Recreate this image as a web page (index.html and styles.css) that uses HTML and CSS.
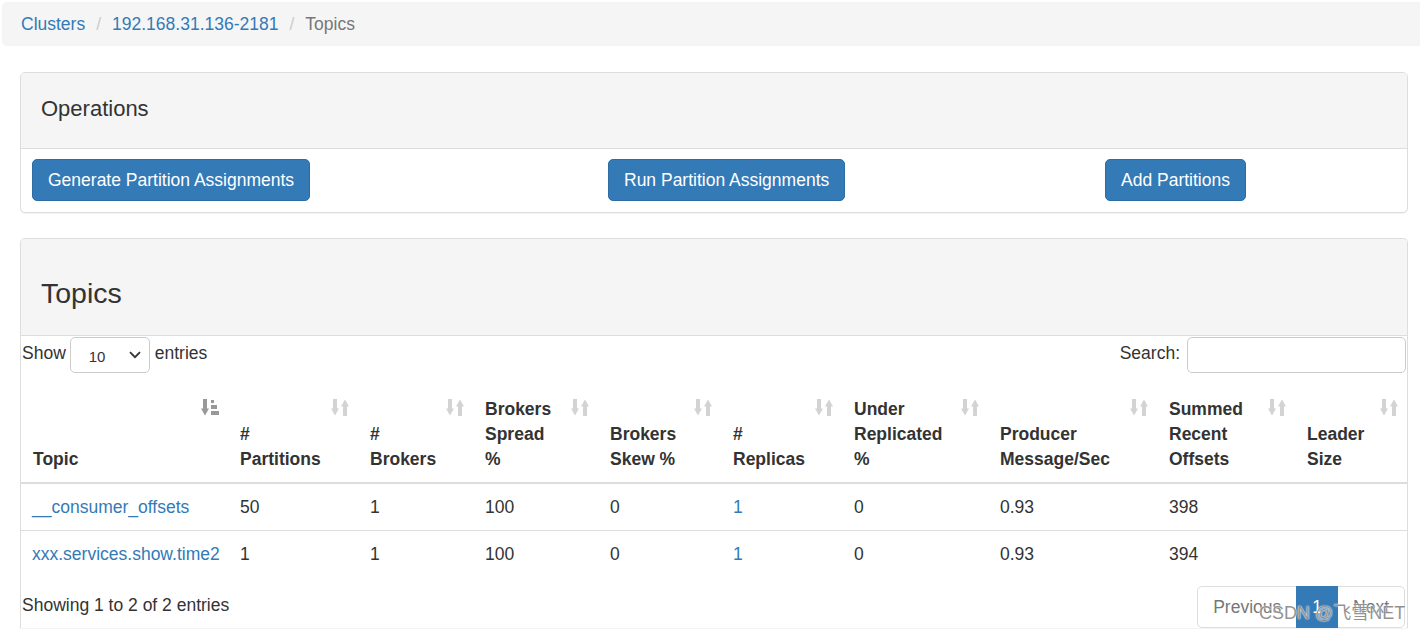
FILE: index.html
```html
<!DOCTYPE html>
<html lang="en">
<head>
<meta charset="utf-8">
<title>Topics</title>
<link rel="stylesheet" href="styles.css">
</head>
<body>
<nav class="crumbs">
  <a class="crumb-link" href="#">Clusters</a>
  <span class="crumb-sep">/</span>
  <a class="crumb-link" href="#">192.168.31.136-2181</a>
  <span class="crumb-sep">/</span>
  <span class="crumb-active">Topics</span>
</nav>

<main class="page">
  <section class="panel">
    <div class="panel-head ops-head"><h3 class="ops-title">Operations</h3></div>
    <div class="ops-body">
      <div class="ops-cell"><button class="btn">Generate Partition Assignments</button></div>
      <div class="ops-cell"><button class="btn">Run Partition Assignments</button></div>
      <div class="ops-cell"><button class="btn">Add Partitions</button></div>
    </div>
  </section>

  <section class="panel topics-panel">
    <div class="panel-head topics-head"><h2 class="topics-title">Topics</h2></div>
    <div class="dt-controls">
      <div class="dt-length">
        <span class="ctl-text">Show</span>
        <div class="fake-select"><span class="fake-select-val">10</span>
          <svg class="chev" width="12" height="8" viewBox="0 0 12 8"><path d="M1 1.2 L6 6.2 L11 1.2" fill="none" stroke="#333" stroke-width="1.8"/></svg>
        </div>
        <span class="ctl-text">entries</span>
      </div>
      <div class="dt-search">
        <span class="ctl-text">Search:</span>
        <div class="search-input"></div>
      </div>
    </div>

    <table class="dt">
      <colgroup>
        <col class="c-topic"><col class="c-part"><col class="c-brok"><col class="c-spread"><col class="c-skew">
        <col class="c-repl"><col class="c-under"><col class="c-prod"><col class="c-sum"><col class="c-lead">
      </colgroup>
      <thead>
        <tr>
          <th>Topic<svg class="sort sorted" width="19" height="17" viewBox="0 0 19 17"><rect x="2" y="0" width="4" height="10"/><path d="M0 9.5 H8 L4 16.5 Z"/><rect x="10" y="1" width="3" height="3"/><rect x="10" y="6" width="6" height="4"/><rect x="10" y="12" width="8" height="4"/></svg></th>
          <th>#<br>Partitions<svg class="sort" width="19" height="17" viewBox="0 0 19 17"><rect x="2" y="0" width="4" height="10"/><path d="M0 9.5 H8 L4 16.5 Z"/><path d="M10 7.5 H18 L14 0.5 Z"/><rect x="12" y="7" width="4" height="10"/></svg></th>
          <th>#<br>Brokers<svg class="sort" width="19" height="17" viewBox="0 0 19 17"><rect x="2" y="0" width="4" height="10"/><path d="M0 9.5 H8 L4 16.5 Z"/><path d="M10 7.5 H18 L14 0.5 Z"/><rect x="12" y="7" width="4" height="10"/></svg></th>
          <th>Brokers<br>Spread<br>%<svg class="sort" width="19" height="17" viewBox="0 0 19 17"><rect x="2" y="0" width="4" height="10"/><path d="M0 9.5 H8 L4 16.5 Z"/><path d="M10 7.5 H18 L14 0.5 Z"/><rect x="12" y="7" width="4" height="10"/></svg></th>
          <th>Brokers<br>Skew %<svg class="sort" width="19" height="17" viewBox="0 0 19 17"><rect x="2" y="0" width="4" height="10"/><path d="M0 9.5 H8 L4 16.5 Z"/><path d="M10 7.5 H18 L14 0.5 Z"/><rect x="12" y="7" width="4" height="10"/></svg></th>
          <th>#<br>Replicas<svg class="sort" width="19" height="17" viewBox="0 0 19 17"><rect x="2" y="0" width="4" height="10"/><path d="M0 9.5 H8 L4 16.5 Z"/><path d="M10 7.5 H18 L14 0.5 Z"/><rect x="12" y="7" width="4" height="10"/></svg></th>
          <th>Under<br>Replicated<br>%<svg class="sort" width="19" height="17" viewBox="0 0 19 17"><rect x="2" y="0" width="4" height="10"/><path d="M0 9.5 H8 L4 16.5 Z"/><path d="M10 7.5 H18 L14 0.5 Z"/><rect x="12" y="7" width="4" height="10"/></svg></th>
          <th>Producer<br>Message/Sec<svg class="sort" width="19" height="17" viewBox="0 0 19 17"><rect x="2" y="0" width="4" height="10"/><path d="M0 9.5 H8 L4 16.5 Z"/><path d="M10 7.5 H18 L14 0.5 Z"/><rect x="12" y="7" width="4" height="10"/></svg></th>
          <th>Summed<br>Recent<br>Offsets<svg class="sort" width="19" height="17" viewBox="0 0 19 17"><rect x="2" y="0" width="4" height="10"/><path d="M0 9.5 H8 L4 16.5 Z"/><path d="M10 7.5 H18 L14 0.5 Z"/><rect x="12" y="7" width="4" height="10"/></svg></th>
          <th>Leader<br>Size<svg class="sort" width="19" height="17" viewBox="0 0 19 17"><rect x="2" y="0" width="4" height="10"/><path d="M0 9.5 H8 L4 16.5 Z"/><path d="M10 7.5 H18 L14 0.5 Z"/><rect x="12" y="7" width="4" height="10"/></svg></th>
        </tr>
      </thead>
      <tbody>
        <tr>
          <td class="first"><a class="link" href="#">__consumer_offsets</a></td>
          <td>50</td><td>1</td><td>100</td><td>0</td>
          <td><a class="link" href="#">1</a></td>
          <td>0</td><td>0.93</td><td>398</td><td></td>
        </tr>
        <tr>
          <td class="first"><a class="link" href="#">xxx.services.show.time2</a></td>
          <td>1</td><td>1</td><td>100</td><td>0</td>
          <td><a class="link" href="#">1</a></td>
          <td>0</td><td>0.93</td><td>394</td><td></td>
        </tr>
      </tbody>
    </table>

    <div class="dt-foot">
      <div class="dt-info">Showing 1 to 2 of 2 entries</div>
      <ul class="pager">
        <li class="pg disabled">Previous</li>
        <li class="pg active">1</li>
        <li class="pg disabled">Next</li>
      </ul>
    </div>
  </section>
</main>

<div class="watermark">CSDN @飞雪NET</div>
</body>
</html>
```

FILE: styles.css
```css
html, body {
  margin: 0;
  padding: 0;
  background: #fff;
}
body {
  font-family: "Liberation Sans", Arial, "Noto Sans CJK SC", sans-serif;
  font-size: 17.5px;
  line-height: 25px;
  color: #333;
  overflow: hidden;
  height: 634px;
}
a { text-decoration: none; }

/* breadcrumb */
.crumbs {
  margin: 2px 0 0 2px;
  height: 44px;
  box-sizing: border-box;
  padding: 10px 19px;
  background: #f5f5f5;
  border-radius: 5px 0 0 5px;
  display: flex;
  align-items: center;
  white-space: nowrap;
}
.crumb-link { color: #337ab7; }
.crumb-sep { color: #ccc; padding: 0 11px 0 11px; }
.crumb-active { color: #777; }

/* page container */
.page {
  padding: 26px 12px 0 20px;
}
.panel {
  border: 1px solid #ddd;
  border-radius: 5px;
  background: #fff;
  box-shadow: 0 1px 1px rgba(0,0,0,0.05);
  margin-bottom: 25px;
}
.panel-head {
  background: #f5f5f5;
  border-bottom: 1px solid #ddd;
  border-radius: 4px 4px 0 0;
  padding: 0 20px;
  box-sizing: border-box;
}
.ops-head { height: 76px; padding-top: 24px; }
.ops-title {
  margin: 0;
  font-size: 22px;
  line-height: 24px;
  font-weight: normal;
  color: #333;
}
.ops-body {
  display: grid;
  grid-template-columns: 576px 497px 1fr;
  padding: 10px 9px 11px 11px;
}
.ops-cell { display: flex; }
.btn {
  font-family: "Liberation Sans", Arial, sans-serif;
  font-size: 17.5px;
  line-height: 25px;
  height: 42px;
  padding: 0 15px;
  color: #fff;
  background: #337ab7;
  border: 1px solid #2e6da4;
  border-radius: 5px;
  white-space: nowrap;
}

/* topics */
.topics-panel { border-bottom: 0; border-radius: 5px 5px 0 0; }
.topics-head { height: 97px; padding-top: 39px; }
.topics-title {
  margin: 0;
  font-size: 28.5px;
  line-height: 31px;
  font-weight: normal;
  color: #333;
}
.dt-controls {
  display: flex;
  justify-content: space-between;
  align-items: center;
  padding: 1px 1px 0 1px;
  height: 37px;
  box-sizing: border-box;
}
.dt-length, .dt-search {
  display: flex;
  align-items: center;
}
.ctl-text { margin-bottom: 4px; }
.dt-length .fake-select { margin: 0 5px 0 4px; }
.dt-search .search-input { margin-left: 7px; }
.fake-select {
  width: 80px;
  height: 36px;
  box-sizing: border-box;
  border: 1px solid #ccc;
  border-radius: 5px;
  display: flex;
  align-items: center;
  justify-content: space-between;
  padding: 0 8px 0 18px;
  font-size: 15px;
}
.fake-select-val { padding-top: 2px; }
.search-input {
  width: 219px;
  height: 36px;
  box-sizing: border-box;
  border: 1px solid #ccc;
  border-radius: 5px;
}

/* table */
.dt {
  margin-top: 10px;
  width: 100%;
  border-collapse: collapse;
  table-layout: fixed;
}
.c-topic { width: 207px; }
.c-part { width: 130px; }
.c-brok { width: 115px; }
.c-spread { width: 125px; }
.c-skew { width: 123px; }
.c-repl { width: 121px; }
.c-under { width: 146px; }
.c-prod { width: 169px; }
.c-sum { width: 138px; }
.c-lead { width: 112px; }
.dt th {
  position: relative;
  text-align: left;
  vertical-align: bottom;
  font-weight: bold;
  padding: 14px 12px 10px 12px;
  line-height: 25px;
  border-bottom: 2px solid #ddd;
  white-space: nowrap;
}
.sort {
  position: absolute;
  top: 16px;
  right: 8px;
  fill: #d3d3d3;
}
.sort.sorted { fill: #999; }
.dt td {
  padding: 11px 12px 10px;
  line-height: 25px;
  border-top: 1px solid #ddd;
  vertical-align: top;
  white-space: nowrap;
}
.dt tbody tr:first-child td { border-top: 0; }
.dt td.first { padding-left: 11px; }
.link { color: #337ab7; }

.dt-foot {
  display: flex;
  justify-content: space-between;
  align-items: center;
  padding: 9px 2px 0 1px;
}
.dt-info { margin-bottom: 4px; }
.pager {
  list-style: none;
  margin: 0;
  padding: 0;
  display: flex;
}
.pg {
  padding: 8px 15px 7px;
  line-height: 25px;
  border: 1px solid #ddd;
  margin-left: -1px;
}
.pg:first-child { border-radius: 5px 0 0 5px; margin-left: 0; }
.pg:last-child { border-radius: 0 5px 5px 0; }
.pg.disabled { color: #777; }
.pg.active {
  background: #337ab7;
  border-color: #337ab7;
  color: #fff;
  position: relative;
}

.watermark {
  position: absolute;
  left: 1259px;
  top: 601px;
  font-family: "Liberation Sans", "Noto Sans CJK SC", sans-serif;
  font-size: 18px;
  line-height: 24px;
  color: rgba(110,110,110,0.75);
  text-shadow: 0 0 1px #fff, 0 0 2px #fff;
  white-space: nowrap;
  pointer-events: none;
}
```
